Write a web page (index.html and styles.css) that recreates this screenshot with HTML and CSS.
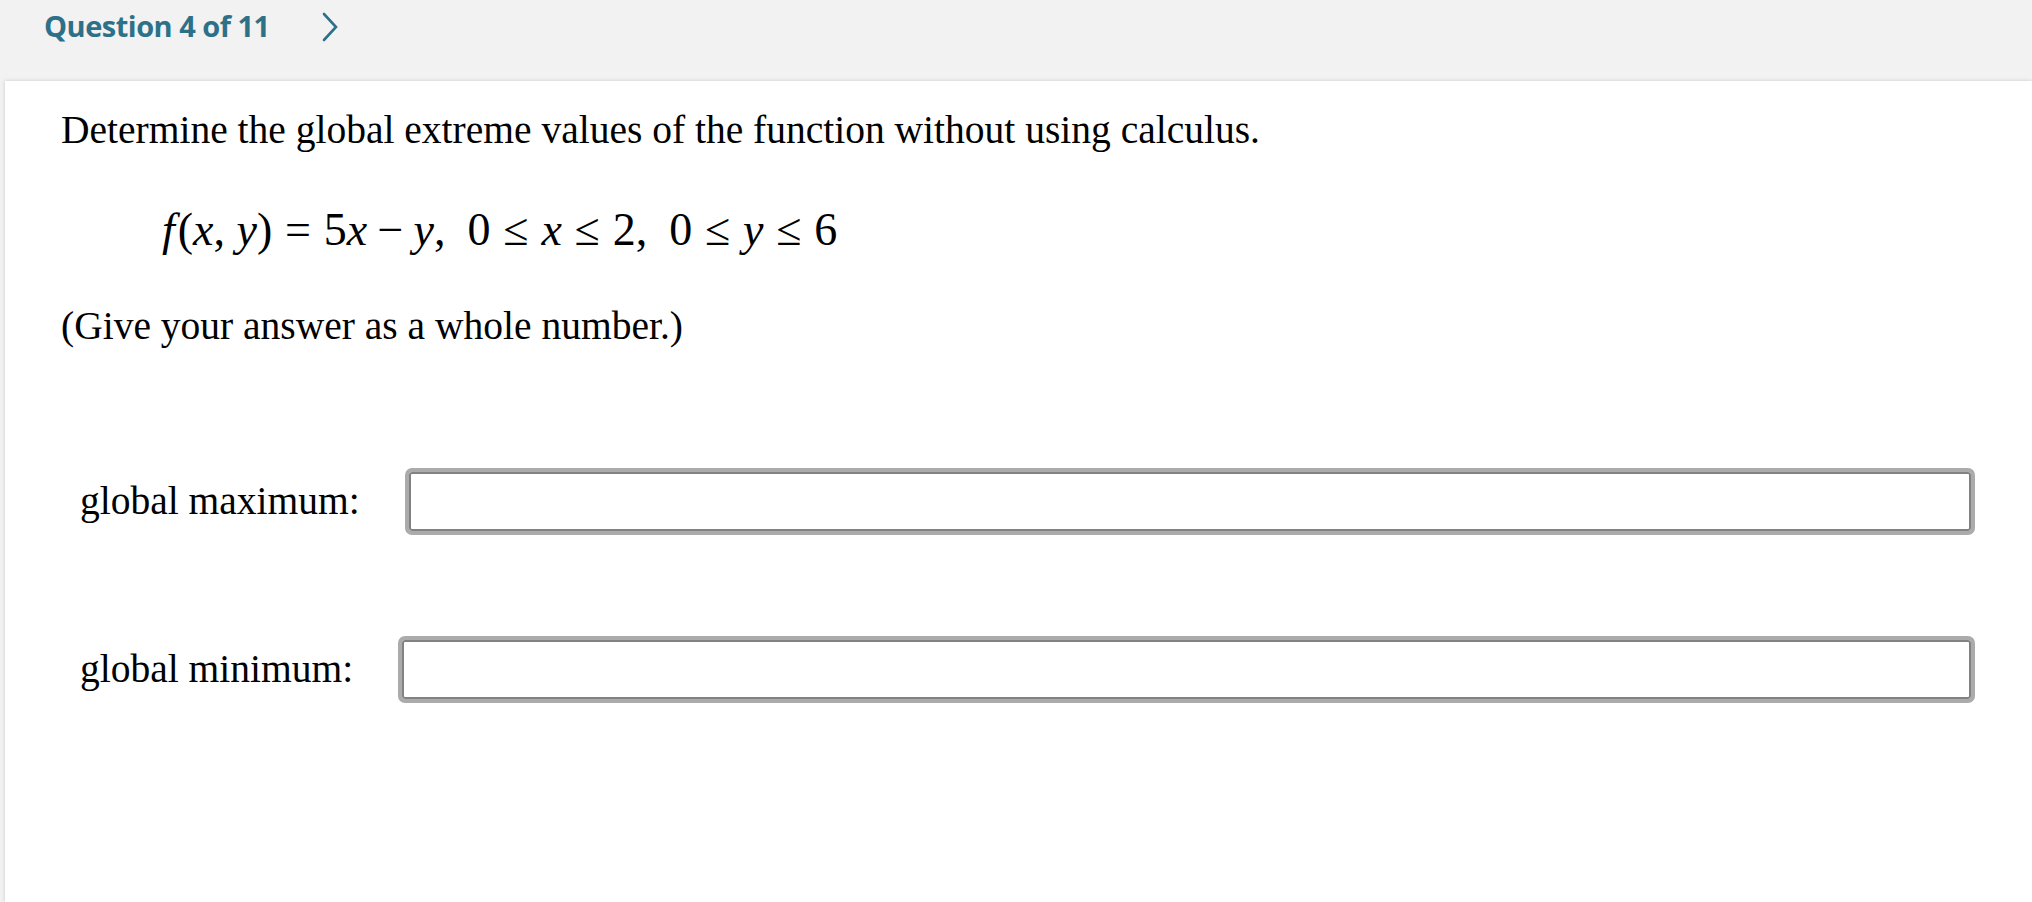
FILE: index.html
```html
<!DOCTYPE html>
<html lang="en">
<head>
<meta charset="utf-8">
<title>Question 4 of 11</title>
<link rel="stylesheet" href="styles.css">
</head>
<body>
<header class="topbar">
  <span class="qnum">Question 4 of 11</span>
  <svg class="chev" width="18" height="30" viewBox="0 0 18 30" aria-hidden="true">
    <path d="M3 2 L15 15 L3 28" fill="none" stroke="#2d7189" stroke-width="2.6" stroke-linecap="round" stroke-linejoin="miter"/>
  </svg>
</header>
<main class="card">
  <p class="para first">Determine the global extreme values of the function without using calculus.</p>
  <p class="formula"><span class="math"><i class="fi">f</i>(<i>x</i>,<span class="thin"></span><i>y</i>)<span class="rel">=</span>5<i>x</i><span class="bin">−</span><i>y</i>,<span class="gap"></span>0<span class="rel">≤</span><i>x</i><span class="rel">≤</span>2,<span class="gap"></span>0<span class="rel">≤</span><i>y</i><span class="rel">≤</span>6</span></p>
  <p class="para">(Give your answer as a whole number.)</p>
  <div class="answer first-answer">
    <label class="lbl" for="gmax">global maximum:</label>
    <input class="box" id="gmax" type="text">
  </div>
  <div class="answer second-answer">
    <label class="lbl" for="gmin">global minimum:</label>
    <input class="box" id="gmin" type="text">
  </div>
</main>
</body>
</html>
```
FILE: styles.css
```css
html, body {
  margin: 0;
  padding: 0;
  height: 100%;
}
body {
  background: #f2f2f2;
  display: flex;
  flex-direction: column;
  font-family: "Liberation Serif", "Times New Roman", serif;
  color: #000;
  overflow: hidden;
}
.topbar {
  height: 80px;
  box-sizing: border-box;
  padding: 11px 0 0 44px;
  display: flex;
  align-items: flex-start;
  gap: 51px;
  flex: none;
}
.qnum {
  font-family: "Open Sans", "Noto Sans", sans-serif;
  font-weight: 700;
  font-size: 29px;
  line-height: 30px;
  letter-spacing: -0.5px;
  color: #2d7189;
}
.chev {
  display: block;
  margin-top: 1px;
}
.card {
  flex: 1;
  margin: 1px 0 0 5px;
  background: #fff;
  box-shadow: 0 0 4px rgba(0, 0, 0, 0.16);
  padding: 27px 57px 0 56px;
}
.para {
  margin: 0;
  font-size: 39.5px;
  line-height: 45px;
}
.formula {
  margin: 51px 0 49px 0;
  padding-left: 101px;
  font-size: 46px;
  line-height: 51px;
}
.math i {
  font-style: italic;
}
.math .fi {
  margin-right: 3px;
}
.thin {
  display: inline-block;
  width: 0.25em;
}
.rel {
  margin: 0 0.278em;
}
.bin {
  margin: 0 0.222em;
}
.gap {
  display: inline-block;
  width: 0.48em;
}
.answer {
  display: flex;
  align-items: center;
  gap: 45px;
  padding-left: 19px;
}
.first-answer {
  margin-top: 119px;
}
.second-answer {
  margin-top: 101px;
}
.lbl {
  font-size: 39.5px;
  line-height: 45px;
  white-space: nowrap;
}
.box {
  flex: 1;
  height: 67px;
  box-sizing: border-box;
  margin: 0;
  border: 4px solid #ababab;
  border-radius: 7px;
  box-shadow: inset 0 0 0 2px #828282;
  background: #fff;
  outline: none;
  font-family: "Liberation Serif", serif;
  font-size: 39px;
  padding: 0 8px;
}
```
